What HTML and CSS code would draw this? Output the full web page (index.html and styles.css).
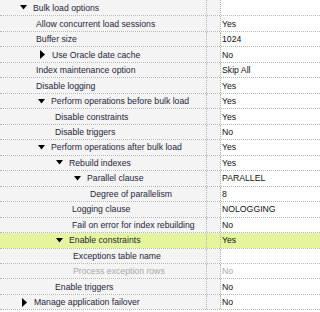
FILE: index.html
```html
<!DOCTYPE html>
<html>
<head>
<meta charset="utf-8">
<link rel="stylesheet" href="styles.css">
</head>
<body>
<div class="tree">
  <div class="row first"><div class="lbl p20"><svg class="tdown" width="7" height="5" viewBox="0 0 7 5"><polygon points="0,0 7,0 3.5,4.5"/></svg><span>Bulk load options</span></div><div class="gap"></div><div class="val"></div></div>
  <div class="row"><div class="lbl p36"><span>Allow concurrent load sessions</span></div><div class="gap"></div><div class="val">Yes</div></div>
  <div class="row"><div class="lbl p36"><span>Buffer size</span></div><div class="gap"></div><div class="val">1024</div></div>
  <div class="row"><div class="lbl p40"><svg class="tright" width="5" height="9" viewBox="0 0 5 9"><polygon points="0,0 5,4.5 0,9"/></svg><span>Use Oracle date cache</span></div><div class="gap"></div><div class="val">No</div></div>
  <div class="row"><div class="lbl p36"><span>Index maintenance option</span></div><div class="gap"></div><div class="val">Skip All</div></div>
  <div class="row"><div class="lbl p36"><span>Disable logging</span></div><div class="gap"></div><div class="val">Yes</div></div>
  <div class="row"><div class="lbl p38"><svg class="tdown" width="7" height="5" viewBox="0 0 7 5"><polygon points="0,0 7,0 3.5,4.5"/></svg><span>Perform operations before bulk load</span></div><div class="gap"></div><div class="val">Yes</div></div>
  <div class="row"><div class="lbl p55"><span>Disable constraints</span></div><div class="gap"></div><div class="val">Yes</div></div>
  <div class="row"><div class="lbl p55"><span>Disable triggers</span></div><div class="gap"></div><div class="val">No</div></div>
  <div class="row"><div class="lbl p38"><svg class="tdown" width="7" height="5" viewBox="0 0 7 5"><polygon points="0,0 7,0 3.5,4.5"/></svg><span>Perform operations after bulk load</span></div><div class="gap"></div><div class="val">Yes</div></div>
  <div class="row"><div class="lbl p56"><svg class="tdown" width="7" height="5" viewBox="0 0 7 5"><polygon points="0,0 7,0 3.5,4.5"/></svg><span>Rebuild indexes</span></div><div class="gap"></div><div class="val">Yes</div></div>
  <div class="row"><div class="lbl p74"><svg class="tdown" width="7" height="5" viewBox="0 0 7 5"><polygon points="0,0 7,0 3.5,4.5"/></svg><span>Parallel clause</span></div><div class="gap"></div><div class="val">PARALLEL</div></div>
  <div class="row"><div class="lbl p90"><span>Degree of parallelism</span></div><div class="gap"></div><div class="val">8</div></div>
  <div class="row"><div class="lbl p72"><span>Logging clause</span></div><div class="gap"></div><div class="val">NOLOGGING</div></div>
  <div class="row"><div class="lbl p72"><span>Fail on error for index rebuilding</span></div><div class="gap"></div><div class="val">No</div></div>
  <div class="row sel"><div class="lbl p56"><svg class="tdown" width="7" height="5" viewBox="0 0 7 5"><polygon points="0,0 7,0 3.5,4.5"/></svg><span>Enable constraints</span></div><div class="gap"></div><div class="val">Yes</div></div>
  <div class="row"><div class="lbl p73"><span>Exceptions table name</span></div><div class="gap"></div><div class="val"></div></div>
  <div class="row dis"><div class="lbl p73"><span>Process exception rows</span></div><div class="gap"></div><div class="val">No</div></div>
  <div class="row"><div class="lbl p55"><span>Enable triggers</span></div><div class="gap"></div><div class="val">No</div></div>
  <div class="row"><div class="lbl p22"><svg class="tright" width="5" height="9" viewBox="0 0 5 9"><polygon points="0,0 5,4.5 0,9"/></svg><span>Manage application failover</span></div><div class="gap"></div><div class="val">No</div></div>
</div>
</body>
</html>
```
FILE: styles.css
```css
html, body {
  margin: 0;
  padding: 0;
  background: #ffffff;
}
body {
  width: 320px;
  height: 312px;
  overflow: hidden;
  font-family: "Liberation Sans", Arial, sans-serif;
  font-size: 8.7px;
}
.tree {
  display: flex;
  flex-direction: column;
}
.row {
  display: flex;
  height: 15.47px;
  box-sizing: border-box;
  border-bottom: 1px dotted #b4b4b4;
}
.row.first {
  height: 16.47px;
}
.lbl {
  width: 207px;
  box-sizing: border-box;
  background: #f4f4f4;
  border-right: 1px dotted #b4b4b4;
  display: flex;
  align-items: center;
  color: #1e1e3a;
  white-space: nowrap;
  overflow: hidden;
}
.gap {
  width: 14px;
  box-sizing: border-box;
  background: #f4f4f4;
  border-right: 1px dotted #b4b4b4;
}
.val {
  flex: 1;
  display: flex;
  align-items: center;
  padding-left: 1px;
  color: #111111;
  background: #ffffff;
}
.sel .lbl, .sel .gap, .sel .val {
  background: #e4f59c;
}
.dis .lbl, .dis .val {
  color: #a8a8a8;
}
.tdown, .tright {
  flex: none;
  fill: #000000;
}
.tdown { margin-right: 6px; }
.tright { margin-right: 7px; }
.p20 { padding-left: 20px; }
.p22 { padding-left: 22px; }
.p36 { padding-left: 36px; }
.p38 { padding-left: 38px; }
.p40 { padding-left: 40px; }
.p55 { padding-left: 55px; }
.p56 { padding-left: 56px; }
.p72 { padding-left: 72px; }
.p73 { padding-left: 73px; }
.p74 { padding-left: 74px; }
.p90 { padding-left: 90px; }
```
